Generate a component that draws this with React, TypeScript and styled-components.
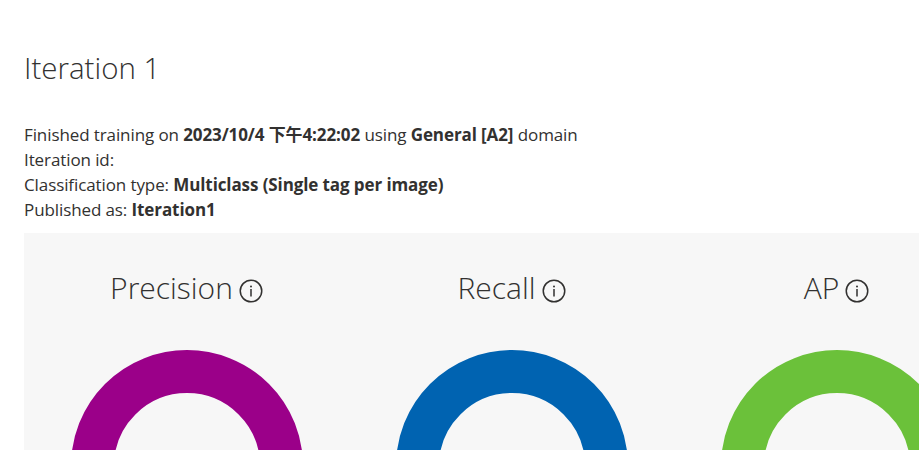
import React from "react";
import styled, { createGlobalStyle } from "styled-components";

const Global = createGlobalStyle`
  html, body { margin: 0; padding: 0; background: #ffffff; }
  body {
    width: 919px;
    height: 450px;
    overflow: hidden;
    font-family: "Open Sans", "Noto Sans CJK SC", sans-serif;
    color: #323130;
  }
`;

const Page = styled.div`
  padding: 44px 0 0 24px;
  display: flex;
  flex-direction: column;
`;

const Heading = styled.h1`
  margin: 0;
  font-size: 29.5px;
  font-weight: 300;
  line-height: 48px;
  color: #323130;
`;

const Details = styled.div`
  margin-top: 30px;
  display: flex;
  flex-direction: column;
  font-size: 17px;
  line-height: 25px;
  letter-spacing: -0.1px;
`;

const Line = styled.div`
  white-space: nowrap;
`;

const Strong = styled.b`
  font-weight: 700;
`;

const Panel = styled.div`
  margin-top: 11px;
  background: #f7f7f7;
  display: flex;
  width: 1100px;
  height: 240px;
`;

const Metric = styled.div`
  flex: 0 0 325px;
  display: flex;
  flex-direction: column;
  align-items: center;
  padding-top: 35px;
`;

const Title = styled.div`
  display: flex;
  align-items: center;
  gap: 6px;
  font-size: 30px;
  font-weight: 300;
  line-height: 40px;
  color: #323130;
`;

const Gauge = styled.svg`
  margin-top: 42px;
  display: block;
  flex-shrink: 0;
`;

const InfoIcon = () => (
  <svg width="24" height="24" viewBox="0 0 24 24" style={{ marginTop: 6 }}>
    <circle cx="12" cy="12" r="10.75" fill="none" stroke="#323130" strokeWidth="1.5" />
    <circle cx="12" cy="7.5" r="1" fill="#323130" />
    <rect x="11.25" y="10" width="1.5" height="7.5" fill="#323130" />
  </svg>
);

const Donut = ({ color }: { color: string }) => (
  <Gauge width="232" height="232" viewBox="0 0 232 232">
    <circle cx="116" cy="116" r="94.5" fill="none" stroke={color} strokeWidth="43" />
  </Gauge>
);

const metrics = [
  { name: "Precision", color: "#9b0089" },
  { name: "Recall", color: "#0063b1" },
  { name: "AP", color: "#6bc13a" },
];

export default function App() {
  return (
    <>
      <Global />
      <Page>
        <Heading>Iteration 1</Heading>
        <Details>
          <Line>
            Finished training on <Strong>2023/10/4 下午4:22:02</Strong> using{" "}
            <Strong>General [A2]</Strong> domain
          </Line>
          <Line>Iteration id: </Line>
          <Line>
            Classification type: <Strong>Multiclass (Single tag per image)</Strong>
          </Line>
          <Line>
            Published as: <Strong>Iteration1</Strong>
          </Line>
        </Details>
        <Panel>
          {metrics.map((m) => (
            <Metric key={m.name}>
              <Title>
                {m.name}
                <InfoIcon />
              </Title>
              <Donut color={m.color} />
            </Metric>
          ))}
        </Panel>
      </Page>
    </>
  );
}
